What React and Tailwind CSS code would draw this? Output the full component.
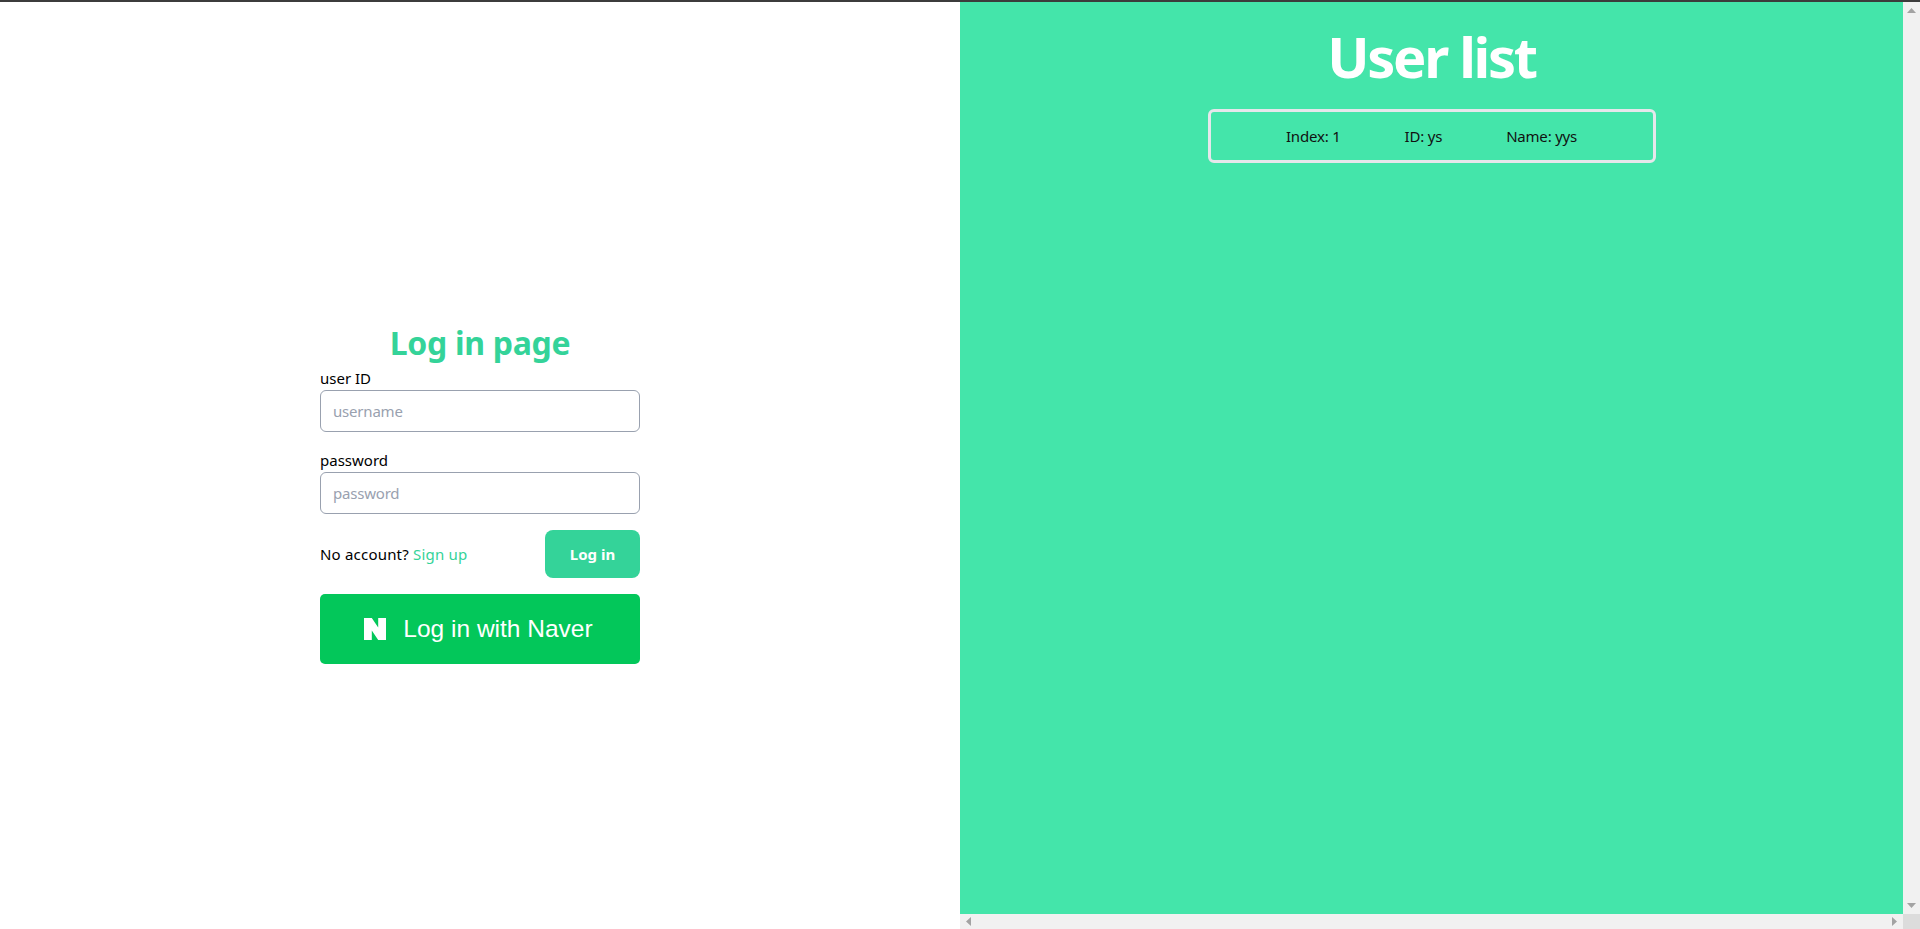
import React from "react";

const uiFont = { fontFamily: '"Noto Sans", "Open Sans", sans-serif' };

const LoginForm = () => {
  return (
    <div className="w-[320px] flex flex-col">
      <h1 className="text-center text-[32px] leading-[42px] font-bold text-[#34d399] tracking-[-0.3px]">Log in page</h1>
      <label className="text-[15px] leading-[20px] text-black mt-[4px] mb-[2px]">user ID</label>
      <input
        className="w-full h-[42px] border border-gray-400 rounded-[6px] px-3 text-[15px] tracking-[-0.2px] outline-none placeholder:text-gray-400"
        placeholder="username"
      />
      <label className="text-[15px] leading-[20px] text-black mt-[18px] mb-[2px]">password</label>
      <input
        className="w-full h-[42px] border border-gray-400 rounded-[6px] px-3 text-[15px] tracking-[-0.2px] outline-none placeholder:text-gray-400"
        placeholder="password"
      />
      <div className="flex items-center justify-between mt-4">
        <span className="text-[15px] tracking-[0.2px] text-black">
          No account? <a className="text-[#34d399]">Sign up</a>
        </span>
        <button className="w-[95px] h-[48px] rounded-[8px] bg-[#34d399] text-white text-[15px] font-bold">Log in</button>
      </div>
      <button className="h-[70px] mt-4 pr-[3px] rounded-[5px] bg-[#03c75a] text-white flex items-center justify-center gap-[17px]">
        <svg width="22" height="22" viewBox="0 0 22 22" fill="white">
          <path d="M0 0h7.8l6.4 9.4V0H22v22h-7.8L7.8 12.6V22H0z" />
        </svg>
        <span className="text-[24.5px] font-['Liberation_Sans',sans-serif]">Log in with Naver</span>
      </button>
    </div>
  );
};

const UserList = () => {
  return (
    <div className="flex-1 bg-[#44e5aa] flex flex-col items-center pt-[18px]">
      <h1 className="text-[56px] leading-[72px] font-bold text-white tracking-[-2.3px]">User list</h1>
      <div className="w-[448px] h-[54px] mt-[17px] border-[3px] border-[#e5e7eb] rounded-[6px] flex items-center justify-center gap-16 text-[15px] tracking-[-0.2px] text-[#111]">
        <span>Index: 1</span>
        <span>ID: ys</span>
        <span>Name: yys</span>
      </div>
    </div>
  );
};

export default function App() {
  return (
    <div className="h-screen flex flex-col overflow-hidden bg-white" style={uiFont}>
      <div className="h-[2px] bg-[#3c3c3c]" />
      <div className="flex-1 flex min-h-0">
        <div className="w-[960px] flex justify-center pt-[320px]">
          <LoginForm />
        </div>
        <div className="flex-1 flex flex-col">
          <div className="flex-1 flex min-h-0">
            <UserList />
            {/* vertical scrollbar */}
            <div className="w-[17px] bg-[#f1f1f1] flex flex-col items-center justify-between py-[6px]">
              <svg width="9" height="5" viewBox="0 0 9 5" fill="#a3a3a3"><path d="M4.5 0L9 5H0z" /></svg>
              <svg width="9" height="5" viewBox="0 0 9 5" fill="#a3a3a3"><path d="M0 0h9L4.5 5z" /></svg>
            </div>
          </div>
          {/* horizontal scrollbar */}
          <div className="h-[15px] flex">
            <div className="flex-1 bg-[#f1f1f1] flex items-center justify-between px-[6px]">
              <svg width="5" height="9" viewBox="0 0 5 9" fill="#a3a3a3"><path d="M5 0v9L0 4.5z" /></svg>
              <svg width="5" height="9" viewBox="0 0 5 9" fill="#a3a3a3"><path d="M0 0l5 4.5L0 9z" /></svg>
            </div>
            <div className="w-[17px] bg-[#dcdcdc]" />
          </div>
        </div>
      </div>
    </div>
  );
}
